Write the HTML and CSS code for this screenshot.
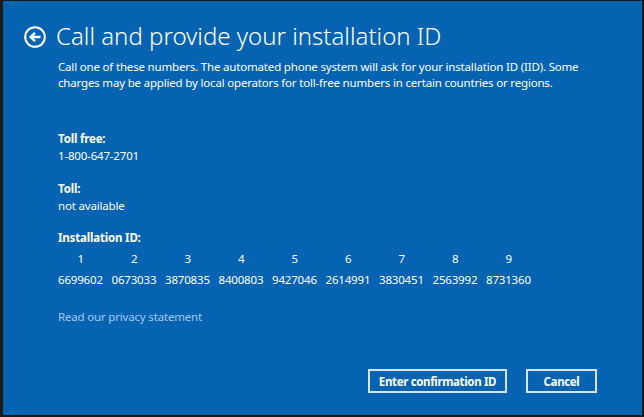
FILE: index.html
```html
<!DOCTYPE html>
<html>
<head>
<meta charset="utf-8">
<link rel="stylesheet" href="styles.css">
</head>
<body>
<div class="window">
  <div class="header">
    <svg class="back" width="22" height="22" viewBox="0 0 22 22">
      <circle cx="11" cy="11" r="9.8" fill="none" stroke="#fff" stroke-width="2"/>
      <path d="M16.5 11H7M11 6.8L6.6 11L11 15.2" fill="none" stroke="#fff" stroke-width="2.4"/>
    </svg>
    <h1 class="title">Call and provide your installation ID</h1>
  </div>
  <div class="content">
    <p class="intro">Call one of these numbers. The automated phone system will ask for your installation ID (IID). Some charges may be applied by local operators for toll-free numbers in certain countries or regions.</p>
    <div class="field">
      <div class="label">Toll free:</div>
      <div class="value">1-800-647-2701</div>
    </div>
    <div class="field">
      <div class="label">Toll:</div>
      <div class="value">not available</div>
    </div>
    <div class="field id-field">
      <div class="label">Installation ID:</div>
      <div class="id-grid">
        <span class="idx">1</span><span class="idx">2</span><span class="idx">3</span><span class="idx">4</span><span class="idx">5</span><span class="idx">6</span><span class="idx">7</span><span class="idx">8</span><span class="idx">9</span>
        <span class="grp">6699602</span><span class="grp">0673033</span><span class="grp">3870835</span><span class="grp">8400803</span><span class="grp">9427046</span><span class="grp">2614991</span><span class="grp">3830451</span><span class="grp">2563992</span><span class="grp">8731360</span>
      </div>
    </div>
    <a class="privacy" href="#">Read our privacy statement</a>
  </div>
  <div class="actions">
    <button class="btn btn-confirm">Enter confirmation ID</button>
    <button class="btn btn-cancel">Cancel</button>
  </div>
</div>
</body>
</html>
```

FILE: styles.css
```css
html, body {
  margin: 0;
  padding: 0;
  background: #0a0a0a;
}
.window {
  box-sizing: border-box;
  width: 644px;
  height: 417px;
  background: #0563b2;
  border-style: solid;
  border-color: #1b1b1b;
  border-width: 1px 2px 2px 3px;
  color: #fff;
  font-family: "Noto Sans", "Open Sans", sans-serif;
  display: flex;
  flex-direction: column;
}
.header {
  display: flex;
  align-items: center;
  padding: 20px 0 0 21px;
  gap: 10px;
}
.back {
  display: block;
  flex: none;
  margin-top: 2px;
}
.title {
  margin: 0;
  font-size: 24px;
  font-weight: 300;
  line-height: 30px;
  letter-spacing: 0;
}
.content {
  padding: 8px 0 0 55px;
  font-size: 11.5px;
  line-height: 16px;
  letter-spacing: -0.18px;
  flex: 1;
}
.intro {
  margin: 0 0 40px 0;
  width: 540px;
}
.field {
  margin-bottom: 16px;
}
.field:first-of-type {
  margin-bottom: 17px;
}
.label {
  font-weight: 700;
}
.value {
  margin-top: 1px;
}
.id-grid {
  display: grid;
  grid-template-columns: repeat(9, 53.5px);
  row-gap: 5px;
  margin-top: 5px;
}
.idx {
  text-align: center;
  padding-right: 8px;
}
.grp {
  text-align: left;
}
.privacy {
  display: inline-block;
  margin-top: 5px;
  color: #a3c9ee;
  text-decoration: none;
}
.actions {
  display: flex;
  justify-content: flex-end;
  gap: 19px;
  padding: 0 45px 22px 0;
}
.btn {
  box-sizing: border-box;
  height: 24px;
  background: transparent;
  border: 2px solid #d6e4f2;
  color: #fff;
  font-family: "Noto Sans", "Open Sans", sans-serif;
  font-size: 11.5px;
  font-weight: 700;
  letter-spacing: -0.35px;
  padding: 0;
}
.btn-confirm {
  width: 139px;
}
.btn-cancel {
  width: 71px;
}
```
